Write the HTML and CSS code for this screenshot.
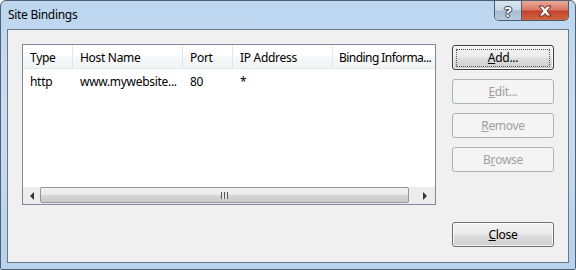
FILE: index.html
```html
<!DOCTYPE html>
<html lang="en">
<head>
	<meta charset="UTF-8">
	<title>Site Bindings</title>
	<link rel="stylesheet" href="styles.css">
</head>
<body>
	<div class="window">
		<div class="titlebar">
			<span class="title">Site Bindings</span>
			<div class="caption-buttons">
				<span class="cap help">?</span>
				<span class="cap close">
					<svg width="16" height="12" viewBox="0 0 16 12">
						<path d="M2 1 L6 1 L8 3.5 L10 1 L14 1 L10 6 L14 11 L10 11 L8 8.5 L6 11 L2 11 L6 6 Z" fill="#fff" stroke="#6b2a20" stroke-width="1"/>
					</svg>
				</span>
			</div>
		</div>
		<div class="client">
			<div class="listview">
				<div class="lv-head">
					<div class="col c-type">Type</div>
					<div class="col c-host">Host Name</div>
					<div class="col c-port">Port</div>
					<div class="col c-ip">IP Address</div>
					<div class="col c-bind">Binding Informa...</div>
				</div>
				<div class="lv-row">
					<div class="col c-type">http</div>
					<div class="col c-host">www.mywebsite...</div>
					<div class="col c-port">80</div>
					<div class="col c-ip">*</div>
					<div class="col c-bind"></div>
				</div>
				<div class="lv-fill"></div>
				<div class="hscroll">
					<div class="sb-arrow">
						<svg width="6" height="8" viewBox="0 0 6 8"><path d="M5 0 L1 4 L5 8 Z" fill="#333"/></svg>
					</div>
					<div class="sb-track">
						<div class="sb-thumb">
							<span class="grip"></span>
						</div>
					</div>
					<div class="sb-arrow right">
						<svg width="6" height="8" viewBox="0 0 6 8"><path d="M1 0 L5 4 L1 8 Z" fill="#333"/></svg>
					</div>
				</div>
			</div>
			<div class="side">
				<div class="buttons">
					<button class="btn default"><span class="focus"><u>A</u>dd...</span></button>
					<button class="btn" disabled><u>E</u>dit...</button>
					<button class="btn" disabled><u>R</u>emove</button>
					<button class="btn" disabled>B<u>r</u>owse</button>
				</div>
				<button class="btn"><u>C</u>lose</button>
			</div>
		</div>
	</div>
</body>
</html>
```

FILE: styles.css
```css
* {
	margin: 0;
	padding: 0;
	box-sizing: border-box;
}
body {
	font-family: "Noto Sans", "Open Sans", sans-serif;
	font-size: 12px;
	letter-spacing: -0.3px;
	color: #000;
	background: #fff;
}
.window {
	width: 576px;
	height: 270px;
	border: 1px solid #50606e;
	border-radius: 6px 6px 2px 2px;
	background: linear-gradient(180deg, #bcd6ef 0%, #c9def3 40%, #b7d2ee 100%);
	display: flex;
	flex-direction: column;
	overflow: hidden;
}
.titlebar {
	height: 28px;
	display: flex;
	justify-content: space-between;
	align-items: flex-start;
	padding-left: 7px;
	padding-right: 6px;
}
.title {
	line-height: 28px;
}
.caption-buttons {
	display: flex;
	border: 1px solid #4f5b68;
	border-top: none;
	border-radius: 0 0 5px 5px;
	overflow: hidden;
	height: 20px;
}
.cap {
	height: 19px;
	display: flex;
	align-items: center;
	justify-content: center;
}
.help {
	width: 27px;
	border-right: 1px solid #4f5b68;
	background: linear-gradient(180deg, #dbe6f1 0%, #c9d7e5 45%, #a9bccf 55%, #b9cbdc 100%);
	color: #fff;
	font-weight: bold;
	font-size: 15px;
	text-shadow: 0 0 1px #324152, 1px 0 0 #324152, -1px 0 0 #324152, 0 1px 0 #324152, 0 -1px 0 #324152;
}
.close {
	width: 46px;
	background: linear-gradient(180deg, #e9a99c 0%, #d97865 45%, #c4452c 55%, #d0643f 100%);
}
.client {
	flex: 1;
	margin: 0 6px 6px 6px;
	border: 1px solid #6b7886;
	background: #f0f0f0;
	display: flex;
	padding: 14px 14px 15px 14px;
	gap: 16px;
}
.listview {
	width: 414px;
	height: 161px;
	border: 1px solid #828790;
	background: #fff;
	display: flex;
	flex-direction: column;
}
.lv-head {
	display: flex;
	height: 24px;
	background: linear-gradient(180deg, #fff 0%, #fff 45%, #f6f7f8 55%, #f3f4f6 100%);
	border-bottom: 1px solid #e5e7ea;
}
.lv-head .col {
	border-right: 1px solid #e3e5e8;
	line-height: 23px;
	padding-top: 1px;
}
.lv-row {
	display: flex;
	height: 22px;
	line-height: 22px;
	padding-top: 2px;
}
.col {
	padding-left: 7px;
	white-space: nowrap;
	overflow: hidden;
	flex-shrink: 0;
}
.c-type { width: 50px; }
.c-host { width: 110px; }
.c-port { width: 50px; }
.c-ip { width: 100px; }
.c-bind {
	width: 102px;
	padding-left: 6px;
	letter-spacing: -0.55px;
	overflow: visible;
	border-right: none !important;
}
.lv-fill {
	flex: 1;
}
.hscroll {
	height: 17px;
	display: flex;
	background: #ececec;
}
.sb-arrow {
	width: 17px;
	display: flex;
	align-items: center;
	justify-content: center;
}
.sb-arrow.right {
	width: 26px;
	padding-left: 6px;
}
.sb-track {
	flex: 1;
	display: flex;
}
.sb-thumb {
	width: 369px;
	height: 16px;
	border: 1px solid #969696;
	border-radius: 2px;
	background: linear-gradient(180deg, #f1f1f1 0%, #ebebeb 45%, #d4d4d4 55%, #cacaca 100%);
	display: flex;
	align-items: center;
	justify-content: center;
}
.grip {
	width: 7px;
	height: 7px;
	background: repeating-linear-gradient(90deg, #555 0 1px, #e6e6e6 1px 3px);
}
.side {
	width: 102px;
	display: flex;
	flex-direction: column;
	justify-content: space-between;
	padding-top: 1px;
}
.buttons {
	display: flex;
	flex-direction: column;
	gap: 9px;
}
.btn {
	width: 102px;
	height: 25px;
	font-family: inherit;
	font-size: 12px;
	letter-spacing: -0.3px;
	color: #000;
	border: 1px solid #707070;
	border-radius: 3px;
	background: linear-gradient(180deg, #f2f2f2 0%, #ebebeb 45%, #dddddd 55%, #cfcfcf 100%);
	box-shadow: inset 0 0 0 1px rgba(255,255,255,0.7);
	display: flex;
	align-items: center;
	justify-content: center;
}
.btn.default {
	border-color: #3c3c3c;
}
.btn .focus {
	display: block;
	width: 94px;
	border: 1px dotted #555;
	line-height: 16px;
}
.btn:disabled {
	color: #a0a0a0;
	border-color: #adb2b5;
	background: #f4f4f4;
	box-shadow: none;
}
```
